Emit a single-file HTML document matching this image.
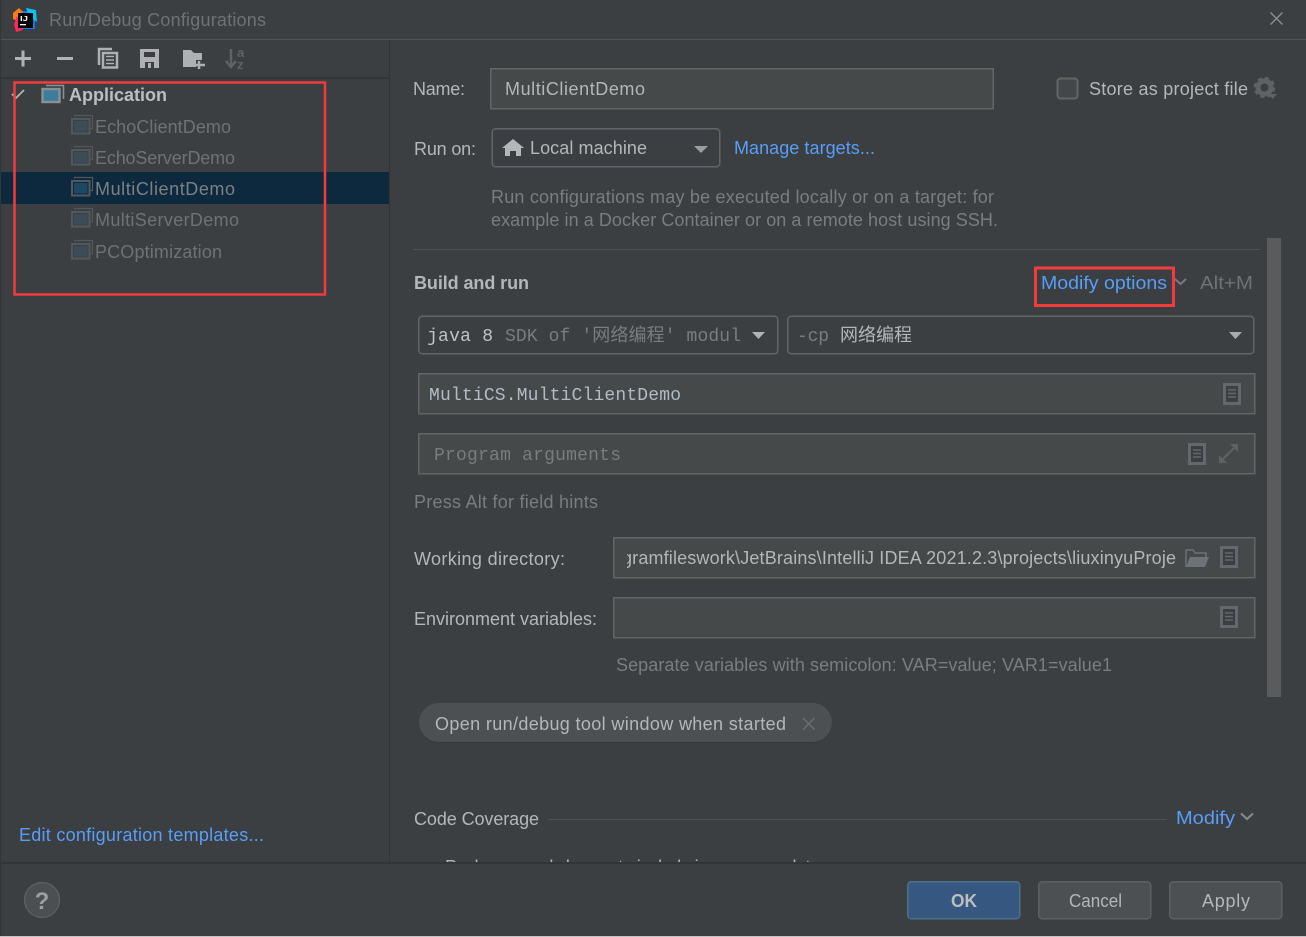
<!DOCTYPE html>
<html><head><meta charset="utf-8"><title>Run/Debug Configurations</title>
<style>
html,body{margin:0;padding:0;width:1306px;height:937px;overflow:hidden;background:#3c3f41}
svg{display:block}
text{font-family:"Liberation Sans","Noto Sans CJK SC",sans-serif;font-size:18px;fill:#b4b6b8}
.m{font-family:"Liberation Mono","Noto Sans CJK SC",monospace}
.d{fill:#7a7c7e}
.l{fill:#589df6}
.b{font-weight:bold}
.t{fill:#6f7173}
.f{fill:#45494a;stroke:#646464;stroke-width:1.5}
.c{fill:#3c3f41;stroke:#646464;stroke-width:1.5}
.btn{fill:#4c5052;stroke:#5e6060;stroke-width:1.5}
</style></head><body>
<svg width="1306" height="937" viewBox="0 0 1306 937" xmlns="http://www.w3.org/2000/svg">
<defs>
<clipPath id="pc"><rect x="627" y="540" width="550" height="36"/></clipPath>
<clipPath id="cc"><rect x="414" y="800" width="840" height="62"/></clipPath>
<g id="cfg">
<path d="M3.500 2.500V1.500h18v13h-2" fill="none" stroke="#52585b" stroke-width="1.200"/>
<rect x="1" y="5" width="17.500" height="14.500" fill="none" stroke="#52585b" stroke-width="2"/>
<rect x="3" y="7" width="13.500" height="10.500" fill="#3c4e55"/>
</g>
<g id="doc">
<rect x="1.500" y="1.500" width="15" height="19" fill="#3c3f41" stroke="#62686b" stroke-width="3"/>
<path d="M5 7h8M5 10.500h8M5 14h8" stroke="#62686b" stroke-width="1.500"/>
</g>
</defs>

<rect width="1306" height="937" fill="#3c3f41"/>
<rect x="0" width="1" height="937" fill="#333537"/>
<rect y="936" width="1306" height="1" fill="#c4c4c4"/>

<!-- title bar -->
<rect x="18" y="11" width="17" height="18" fill="#087cfa"/>
<path d="M13 13l6-5 4 4-5 9-5-2z" fill="#fe7a16"/>
<path d="M14 24l3-8 6 14-7 2z" fill="#fe2857"/>
<path d="M26 8l10 2 1 12-8-6z" fill="#07c3f2"/>
<rect x="18" y="13" width="15" height="15" fill="#000"/>
<text x="20" y="21" style="font-size:7px;font-weight:bold;fill:#fff" textLength="8" lengthAdjust="spacingAndGlyphs">IJ</text>
<rect x="20" y="24" width="6" height="1.300" fill="#fff"/>
<text x="49" y="26" class="t" textLength="217" lengthAdjust="spacing">Run/Debug Configurations</text>
<path d="M1270.500 12.500l12 12M1282.500 12.500l-12 12" stroke="#8c8e90" stroke-width="1.400"/>
<rect x="1" y="39" width="1305" height="1" fill="#515355"/>

<!-- toolbar -->
<path d="M15 58.500h16M23 50.500v16" stroke="#b0b2b3" stroke-width="3"/>
<path d="M57 58.500h16" stroke="#b0b2b3" stroke-width="3"/>
<path d="M99 65V49h13" fill="none" stroke="#aeb0b2" stroke-width="2.500"/>
<rect x="103" y="53" width="14" height="14.500" fill="#3c3f41" stroke="#aeb0b2" stroke-width="2.500"/>
<path d="M106 56.500h8M106 60h8M106 63.500h8" stroke="#aeb0b2" stroke-width="1.500"/>
<path d="M140 49h19v19h-19z" fill="#aeb0b2"/>
<rect x="144" y="52" width="11" height="5" fill="#3c3f41"/>
<rect x="145" y="62" width="9" height="6" fill="#3c3f41"/>
<rect x="148" y="63" width="3" height="5" fill="#aeb0b2"/>
<path d="M183 50h8l3 3h8v7h-6v7h-13z" fill="#aeb0b2"/>
<path d="M199 61v8M195 65h10" stroke="#aeb0b2" stroke-width="2.500"/>
<path d="M231 49v17M226 61l5 6 5-6" fill="none" stroke="#5f6163" stroke-width="2.500"/>
<text x="237" y="57" style="font-size:13px;font-weight:bold;fill:#5f6163">a</text>
<text x="237" y="69" style="font-size:13px;font-weight:bold;fill:#5f6163">z</text>
<rect x="1" y="77" width="388" height="2" fill="#323436"/>
<rect x="389" y="40" width="1" height="823" fill="#323436"/>

<!-- tree -->
<rect x="1" y="172" width="388" height="32" fill="#0d293e"/>
<path d="M12 94l4 4 8-8" fill="none" stroke="#b0b2b3" stroke-width="1.800"/>
<path d="M46 85.500h17.500V99" fill="none" stroke="#8a9196" stroke-width="1.500"/>
<rect x="42.500" y="89" width="17" height="13" fill="#3c7d9b" stroke="#8a9196" stroke-width="2.400"/>
<text x="69" y="101" class="b" textLength="98" lengthAdjust="spacing" style="fill:#bcbec0">Application</text>
<use href="#cfg" x="71" y="114"/>
<use href="#cfg" x="71" y="145"/>
<use href="#cfg" x="71" y="176"/>
<rect x="74" y="183" width="13.500" height="10.500" fill="#1c4866"/>
<use href="#cfg" x="71" y="207"/>
<use href="#cfg" x="71" y="239"/>
<text x="95" y="133" class="t" textLength="136" lengthAdjust="spacing">EchoClientDemo</text>
<text x="95" y="164" class="t" textLength="140" lengthAdjust="spacing">EchoServerDemo</text>
<text x="95" y="195" class="t" textLength="140" lengthAdjust="spacing" style="fill:#7c8084">MultiClientDemo</text>
<text x="95" y="226" class="t" textLength="144" lengthAdjust="spacing">MultiServerDemo</text>
<text x="95" y="258" class="t" textLength="127" lengthAdjust="spacing">PCOptimization</text>
<text x="19" y="841" class="l" textLength="245" lengthAdjust="spacing">Edit configuration templates...</text>

<!-- name row -->
<text x="413" y="95" textLength="52" lengthAdjust="spacing">Name:</text>
<rect x="490.750" y="68.750" width="502.500" height="40" class="f"/>
<text x="505" y="95" textLength="140" lengthAdjust="spacing">MultiClientDemo</text>
<rect x="1057.500" y="78.500" width="20" height="20" rx="3" fill="#43474a" stroke="#646464" stroke-width="2"/>
<text x="1089" y="95" textLength="159" lengthAdjust="spacing">Store as project file</text>
<circle cx="1264.500" cy="87.500" r="6.500" fill="none" stroke="#5f6163" stroke-width="5"/>
<circle cx="1264.500" cy="87.500" r="9" fill="none" stroke="#5f6163" stroke-width="3.500" stroke-dasharray="4 3.070"/>
<path d="M1268 94h9l-4.500 5z" fill="#5f6163"/>

<!-- run on -->
<text x="414" y="155" textLength="62" lengthAdjust="spacing">Run on:</text>
<rect x="492.250" y="128.750" width="227.500" height="38" rx="3.500" class="c"/>
<path d="M513 139l-11 9h3v8h5v-5h6v5h5v-8h3z" fill="#b4b6b8"/>
<text x="530" y="154" textLength="117" lengthAdjust="spacing">Local machine</text>
<path d="M694 146h14l-7 7z" fill="#9a9d9f"/>
<text x="734" y="154" class="l" textLength="141" lengthAdjust="spacing">Manage targets...</text>
<text x="491" y="203" class="d" textLength="503" lengthAdjust="spacing">Run configurations may be executed locally or on a target: for</text>
<text x="491" y="226" class="d" textLength="507" lengthAdjust="spacing">example in a Docker Container or on a remote host using SSH.</text>
<rect x="413" y="249" width="847" height="1" fill="#4f5153"/>

<!-- scrollbar -->
<rect x="1267" y="238" width="14" height="459" fill="#595b5d"/>

<!-- build and run -->
<text x="414" y="289" class="b" textLength="115" lengthAdjust="spacing">Build and run</text>
<text x="1041" y="289" class="l" textLength="126" lengthAdjust="spacingAndGlyphs">Modify options</text>
<path d="M1175 279l5.500 5 5.500-5" fill="none" stroke="#777a7c" stroke-width="2"/>
<text x="1200" y="289" class="t" textLength="53" lengthAdjust="spacingAndGlyphs">Alt+M</text>

<rect x="418.750" y="316.250" width="359" height="37.500" rx="3.500" class="c"/>
<text x="427" y="341" class="m" textLength="66" lengthAdjust="spacing" style="fill:#c0c2c4">java 8</text>
<text x="505" y="341" class="m d" textLength="236" lengthAdjust="spacing">SDK of '网络编程' modul</text>
<path d="M752 332h13l-6.500 7z" fill="#b0b2b3"/>
<rect x="787.750" y="316.250" width="466" height="37.500" rx="3.500" class="c"/>
<text x="797" y="341" class="m d" textLength="32" lengthAdjust="spacing">-cp</text>
<text x="840" y="341" textLength="72" lengthAdjust="spacing">网络编程</text>
<path d="M1229 332h13l-6.500 7z" fill="#a8aaac"/>

<rect x="418.750" y="373.750" width="836" height="40" class="f"/>
<text x="429" y="400" class="m" textLength="252" lengthAdjust="spacing" style="fill:#b2bac4">MultiCS.MultiClientDemo</text>
<use href="#doc" x="1223" y="383"/>

<rect x="418.750" y="433.750" width="836" height="40" class="f"/>
<text x="434" y="460" class="m d" textLength="187" lengthAdjust="spacing">Program arguments</text>
<use href="#doc" x="1188" y="443"/>
<path d="M1219 463v-8l8 8zM1238 444v8l-8-8z" fill="#5d6265"/>
<path d="M1223 459l11-11" stroke="#5d6265" stroke-width="2"/>

<text x="414" y="508" class="d" textLength="184" lengthAdjust="spacing">Press Alt for field hints</text>

<text x="414" y="565" textLength="151" lengthAdjust="spacing">Working directory:</text>
<rect x="613.750" y="537.750" width="641" height="40" class="f"/>
<g clip-path="url(#pc)"><text x="622" y="564" textLength="554" lengthAdjust="spacing">gramfileswork\JetBrains\IntelliJ IDEA 2021.2.3\projects\liuxinyuProje</text></g>
<path d="M1186 567v-17h7l2 3h11v4" fill="none" stroke="#6c7275" stroke-width="1.500"/>
<path d="M1190 557h19l-4 10h-19z" fill="#6c7275"/>
<use href="#doc" x="1220" y="546"/>

<text x="414" y="625" textLength="183" lengthAdjust="spacing">Environment variables:</text>
<rect x="613.750" y="597.750" width="641" height="40" class="f"/>
<use href="#doc" x="1220" y="606"/>
<text x="616" y="671" class="d" textLength="496" lengthAdjust="spacing">Separate variables with semicolon: VAR=value; VAR1=value1</text>

<!-- chip -->
<rect x="419" y="704" width="413" height="39" rx="19.500" fill="#36383a"/>
<rect x="419" y="703" width="413" height="39" rx="19.500" fill="#4c5052"/>
<text x="435" y="730" textLength="351" lengthAdjust="spacing">Open run/debug tool window when started</text>
<path d="M803 718l11.500 11.500M814.500 718l-11.500 11.500" stroke="#6b6e70" stroke-width="1.500"/>

<!-- coverage -->
<text x="414" y="825" textLength="125" lengthAdjust="spacing">Code Coverage</text>
<rect x="548" y="819" width="619" height="1" fill="#505254"/>
<text x="1176" y="824" class="l" textLength="59" lengthAdjust="spacingAndGlyphs">Modify</text>
<path d="M1241 813.500l6 5.500 6-5.500" fill="none" stroke="#85888a" stroke-width="2.200"/>
<g clip-path="url(#cc)"><text x="445" y="873" textLength="375" lengthAdjust="spacing">Packages and classes to include in coverage data</text></g>

<!-- footer -->
<rect x="1" y="862" width="1305" height="2" fill="#323436"/>
<circle cx="42" cy="900" r="17.500" fill="#4b4f51" stroke="#5f6263" stroke-width="1.200"/>
<text x="42" y="909" text-anchor="middle" class="b" style="font-size:24px;fill:#9c9e9f">?</text>

<rect x="907.750" y="881.750" width="112" height="37" rx="3.500" fill="#365880" stroke="#4c708c" stroke-width="1.500"/>
<text x="951" y="907" class="b" textLength="26" lengthAdjust="spacingAndGlyphs" style="fill:#bcbec0">OK</text>
<rect x="1038.750" y="881.750" width="112" height="37" rx="3.500" class="btn"/>
<text x="1069" y="907" textLength="53" lengthAdjust="spacingAndGlyphs">Cancel</text>
<rect x="1169.750" y="881.750" width="112" height="37" rx="3.500" class="btn"/>
<text x="1202" y="907" textLength="48" lengthAdjust="spacing">Apply</text>

<!-- red annotations -->
<rect x="14.500" y="82.500" width="310.500" height="212" fill="none" stroke="#f23c3c" stroke-width="2.500"/>
<rect x="1035.500" y="268" width="138" height="37.500" fill="none" stroke="#f23c3c" stroke-width="3"/>
</svg>
</body></html>
